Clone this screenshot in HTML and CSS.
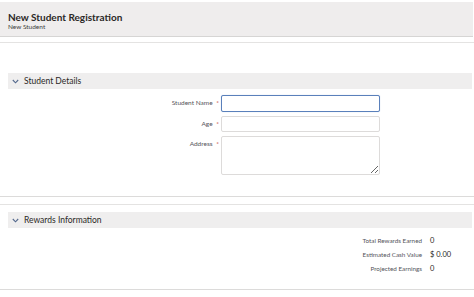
FILE: index.html
```html
<!DOCTYPE html>
<html lang="en">
  <head>
    <meta charset="UTF-8" />
    <meta name="viewport" content="width=device-width, initial-scale=1.0" />
    <title>New Student Registration</title>
    <link rel="stylesheet" href="styles.css">
  </head>
  <body>
    <div class="header">
      <h1>New Student Registration</h1>
      <p>New Student</p>
    </div>

    <div class="card details">
      <div class="band">
        <svg class="chev" width="7" height="5" viewBox="0 0 7 5"><path d="M0.8 1 L3.5 3.8 L6.2 1" fill="none" stroke="#54698d" stroke-width="1.1"/></svg>
        <span>Student Details</span>
      </div>
      <form class="fields">
        <label>Student Name <abbr>*</abbr></label>
        <input type="text" class="focus" />
        <label>Age <abbr>*</abbr></label>
        <input type="text" />
        <label>Address <abbr>*</abbr></label>
        <textarea></textarea>
      </form>
    </div>

    <div class="card rewards">
      <div class="band">
        <svg class="chev" width="7" height="5" viewBox="0 0 7 5"><path d="M0.8 1 L3.5 3.8 L6.2 1" fill="none" stroke="#54698d" stroke-width="1.1"/></svg>
        <span>Rewards Information</span>
      </div>
      <div class="outputs">
        <span class="lbl">Total Rewards Earned</span>
        <span class="val">0</span>
        <span class="lbl">Estimated Cash Value</span>
        <span class="val">$ 0.00</span>
        <span class="lbl">Projected Earnings</span>
        <span class="val">0</span>
      </div>
    </div>
  </body>
</html>
```

FILE: styles.css
```css
* {
  padding: 0;
  margin: 0;
  box-sizing: border-box;
}
body {
  background: #fff;
  font-family: Lato, "Open Sans", sans-serif;
  color: #2b2826;
}
.header {
  margin: 2px 1px 0 0;
  height: 35px;
  background: #efeded;
  border-bottom: 1px solid #d6d5d4;
  padding: 9px 8px 0;
}
.header h1 {
  font-size: 10px;
  font-weight: 700;
  line-height: 12px;
  color: #2b2826;
}
.header p {
  font-size: 6.5px;
  line-height: 8px;
  color: #3e3e3c;
}
.card {
  border-top: 1px solid #e4e3e2;
  border-bottom: 1px solid #dcdbda;
}
.details {
  margin-top: 5px;
  height: 155px;
  padding-top: 30px;
}
.rewards {
  margin-top: 7px;
  height: 86px;
  padding-top: 7px;
}
.band {
  margin: 0 2px 0 8px;
  height: 16px;
  background: #efeeee;
  display: flex;
  align-items: center;
  gap: 5px;
  padding-left: 4px;
  font-size: 8.5px;
  color: #2b2826;
}
.chev {
  display: block;
}
.fields {
  display: grid;
  grid-template-columns: 221px 159px;
  grid-auto-rows: auto;
  row-gap: 4px;
  margin-top: 6px;
}
.fields label {
  font-size: 6.5px;
  color: #54545a;
  text-align: right;
  padding: 4px 2px 0 0;
}
.fields abbr {
  color: #c23934;
  margin-left: 2px;
  text-decoration: none;
}
.fields input,
.fields textarea {
  border: 1px solid #dddbda;
  border-radius: 2px;
  background: #fff;
  height: 16px;
  outline: none;
}
.fields input.focus {
  height: 17px;
  border: 1px solid #5a80bb;
  box-shadow: 0 0 1px #a9bfdf;
}
.fields textarea {
  height: 39px;
  resize: vertical;
}
.outputs {
  display: grid;
  grid-template-columns: 422px auto;
  column-gap: 8px;
  margin-top: 6px;
  font-size: 6.3px;
  line-height: 14px;
}
.outputs .lbl {
  text-align: right;
  color: #54545a;
}
.outputs .val {
  color: #2b2826;
  font-size: 7.5px;
}
```
